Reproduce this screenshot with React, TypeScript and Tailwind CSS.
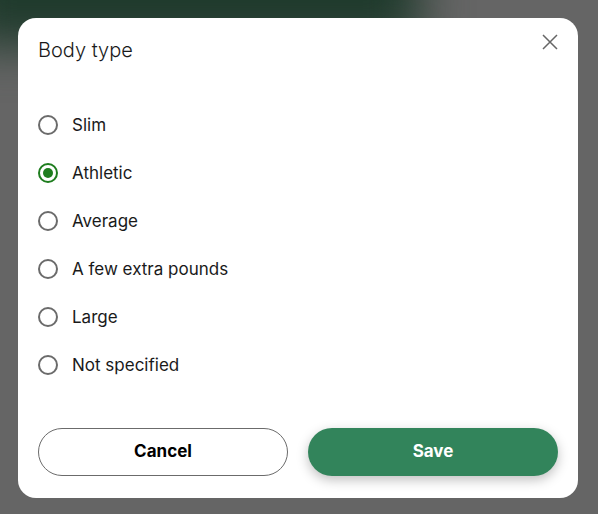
import React, { useState } from "react";

const options = ["Slim", "Athletic", "Average", "A few extra pounds", "Large", "Not specified"];

export default function App() {
  const [selected, setSelected] = useState("Athletic");
  return (
    <div className="relative w-[598px] h-[514px] overflow-hidden bg-[#656565]" style={{ fontFamily: "Inter, 'Liberation Sans', sans-serif" }}>
      <div className="absolute -left-10 -top-16 w-[460px] h-[110px] bg-[#1f3a2c] blur-xl" />
      <div className="relative pt-[18px] pl-[18px]">
        <div className="w-[560px] h-[480px] bg-white rounded-[18px] px-5 pt-[18px] pb-[22px] flex flex-col">
          <div className="flex items-start justify-between">
            <h2 className="text-[20px] leading-[28px] font-light text-[#1a1a1a]">Body type</h2>
            <button className="-mt-[3px] -mr-[1px] text-[#666]">
              <svg width="18" height="18" viewBox="0 0 18 18" fill="none" stroke="currentColor" strokeWidth="1.5">
                <path d="M2 2 L16 16 M16 2 L2 16" />
              </svg>
            </button>
          </div>
          <div className="mt-[37px] flex flex-col">
            {options.map((o) => {
              const on = o === selected;
              return (
                <label key={o} className="h-12 flex items-center gap-[14px] cursor-pointer" onClick={() => setSelected(o)}>
                  <span className={`w-5 h-5 rounded-full border-2 flex items-center justify-center ${on ? "border-[#1e7d1e]" : "border-[#6b6b6b]"}`}>
                    {on && <span className="w-[10px] h-[10px] rounded-full bg-[#1e7d1e]" />}
                  </span>
                  <span className="text-[17px] text-[#1a1a1a] pt-[2px]">{o}</span>
                </label>
              );
            })}
          </div>
          <div className="mt-auto flex gap-5">
            <button className="w-[250px] h-12 rounded-full border border-[#6b6b6b] bg-white text-[17px] font-bold text-black">Cancel</button>
            <button className="w-[250px] h-12 rounded-full bg-[#32845b] text-[17px] font-bold text-white shadow-[0_4px_12px_rgba(0,0,0,0.25)]">Save</button>
          </div>
        </div>
      </div>
    </div>
  );
}
